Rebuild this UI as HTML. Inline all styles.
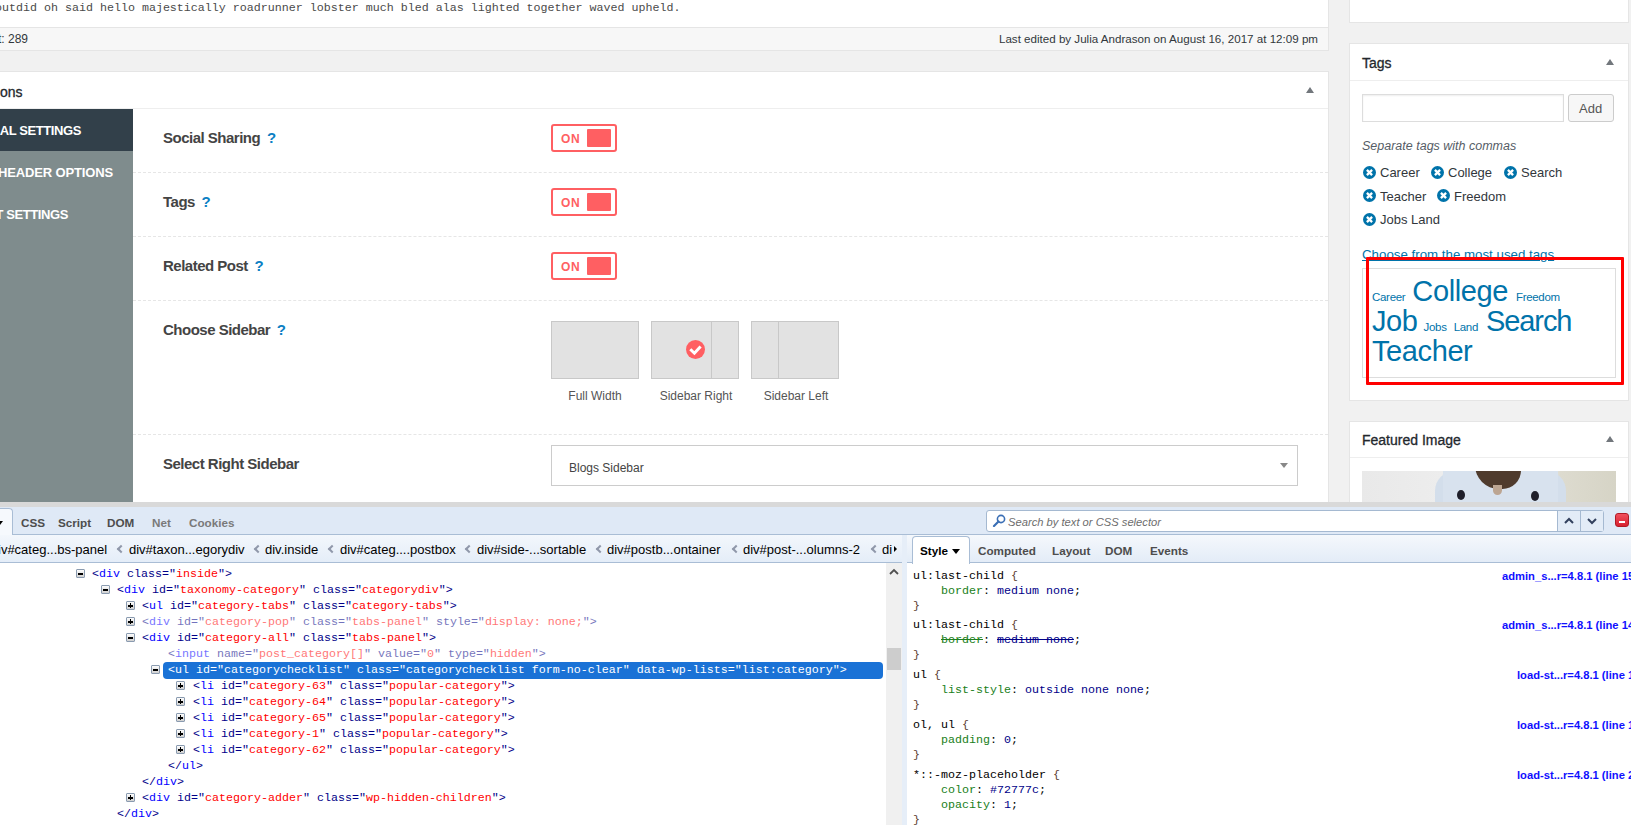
<!DOCTYPE html>
<html><head><meta charset="utf-8">
<style>
*{box-sizing:border-box;margin:0;padding:0}
html,body{width:1631px;height:825px;overflow:hidden;background:#f1f1f1;font-family:"Liberation Sans",sans-serif;position:relative}
.a{position:absolute}
.mono{font-family:"Liberation Mono",monospace}
.nw{white-space:nowrap}

.lbl{font-size:15px;font-weight:bold;color:#444;line-height:16px;letter-spacing:-0.5px}
.q{color:#0c7fc4;margin-left:3px}
.tg{width:66px;height:28px;border:2px solid #ff5f62;border-radius:3px;background:#fff}
.tg span{position:absolute;left:8px;top:7px;font-size:12px;font-weight:bold;color:#ff5f62;line-height:12px;letter-spacing:0.6px}
.tg i{position:absolute;left:34px;top:3px;width:24px;height:18px;background:#ff5f62;border-radius:1px}
.lay{width:88px;height:58px;background:#e2e2e2;border:1px solid #c8c8c8}
.lay b{position:absolute;top:0;bottom:0;width:1px;background:#c8c8c8}
.laylbl{font-size:12px;color:#555;text-align:center;line-height:14px}

.xi{width:13px;height:13px}
.xi svg{display:block}
.tgt{font-size:13px;line-height:16px;color:#32373c}
.cl span{color:#0073aa}

.ftab{font-size:11.7px;font-weight:bold;color:#4d4d4d;line-height:16px}
.bc{font-size:13px;color:#000;line-height:16px}
.bca{width:6px;height:9px;background:none}
.bca:before{content:"";position:absolute;left:1.5px;top:0.5px;width:4px;height:4px;border-left:2px solid #9098aa;border-bottom:2px solid #9098aa;transform:rotate(45deg)}

.dt{font-family:"Liberation Mono",monospace;font-size:11.67px;line-height:16px;color:#000088}
.dt .t{color:#0000ff}
.dt .v{color:#ff0000}
.dg{opacity:.55}
.dh, .dh span{color:#fff !important}
.tb{width:9px;height:9px;border:1px solid #8a9bb0;border-radius:1px;background:linear-gradient(#fdfdfd,#d0d0d0)}
.tb:before{content:"";position:absolute;left:1px;top:3px;width:5px;height:1.5px;background:#000}
.tbp:after{content:"";position:absolute;left:2.8px;top:1px;width:1.5px;height:5px;background:#000}
.ct{font-family:"Liberation Mono",monospace;font-size:11.67px;line-height:16px;color:#000}
.cb{color:#5a4030}
.cp{color:#208020}
.cv{color:#000088}
.lnk{font-size:11.2px;font-weight:bold;color:#1010ff;line-height:16px}
</style></head><body>

<!-- ===== editor top ===== -->
<div class="a" style="left:0;top:0;width:1329px;height:27px;background:#fff;border-right:1px solid #e5e5e5"></div>
<div class="a mono nw" style="left:-5px;top:0px;font-size:11.67px;line-height:16px;color:#4a4a4a">outdid oh said hello majestically roadrunner lobster much bled alas lighted together waved upheld.</div>
<!-- status bar -->
<div class="a" style="left:0;top:27px;width:1329px;height:24px;background:#f7f7f7;border-top:1px solid #e5e5e5;border-bottom:1px solid #e5e5e5;border-right:1px solid #e5e5e5"></div>
<div class="a nw" style="left:-2px;top:31px;font-size:12px;line-height:16px;color:#32373c">t: 289</div>
<div class="a nw" style="right:313px;top:31px;font-size:11.6px;line-height:16px;color:#32373c">Last edited by Julia Andrason on August 16, 2017 at 12:09 pm</div>

<!-- ===== postbox main ===== -->
<div class="a" style="left:0;top:71px;width:1329px;height:440px;background:#fff;border:1px solid #e5e5e5;border-left:0"></div>
<div class="a" style="left:0;top:108px;width:1328px;height:1px;background:#eee"></div>
<div class="a nw" style="left:0;top:84px;font-size:14px;line-height:16px;color:#23282d;-webkit-text-stroke:0.3px #23282d">ons</div>
<div class="a" style="left:1306px;top:87px;width:0;height:0;border-left:4.5px solid transparent;border-right:4.5px solid transparent;border-bottom:6px solid #72777c"></div>

<!-- left nav -->
<div class="a" style="left:0;top:109px;width:133px;height:400px;background:#7f8c8d"></div>
<div class="a" style="left:0;top:109px;width:133px;height:42px;background:#32404a"></div>
<div class="a nw" style="right:1550px;top:124px;font-size:13px;font-weight:bold;color:#fff;line-height:14px;letter-spacing:-0.4px">AL SETTINGS</div>
<div class="a nw" style="right:1518px;top:166px;font-size:13px;font-weight:bold;color:#fff;line-height:14px;letter-spacing:-0.15px">HEADER OPTIONS</div>
<div class="a nw" style="right:1563px;top:208px;font-size:13px;font-weight:bold;color:#fff;line-height:14px;letter-spacing:-0.4px">T SETTINGS</div>

<!-- content rows -->

<!-- row separators (dashed) -->
<div class="a" style="left:133px;top:172px;width:1195px;border-top:1px dashed #e6e6e6"></div>
<div class="a" style="left:133px;top:236px;width:1195px;border-top:1px dashed #e6e6e6"></div>
<div class="a" style="left:133px;top:300px;width:1195px;border-top:1px dashed #e6e6e6"></div>
<div class="a" style="left:133px;top:434px;width:1195px;border-top:1px dashed #e6e6e6"></div>

<div class="a nw lbl" style="left:163px;top:130px">Social Sharing <span class="q">?</span></div>
<div class="a nw lbl" style="left:163px;top:194px">Tags <span class="q">?</span></div>
<div class="a nw lbl" style="left:163px;top:258px">Related Post <span class="q">?</span></div>
<div class="a nw lbl" style="left:163px;top:322px">Choose Sidebar <span class="q">?</span></div>
<div class="a nw lbl" style="left:163px;top:456px">Select Right Sidebar</div>

<div class="a tg" style="left:551px;top:124px"><span>ON</span><i></i></div>
<div class="a tg" style="left:551px;top:188px"><span>ON</span><i></i></div>
<div class="a tg" style="left:551px;top:252px"><span>ON</span><i></i></div>

<div class="a lay" style="left:551px;top:321px"></div>
<div class="a lay" style="left:651px;top:321px"><b style="left:59px"></b></div>
<div class="a lay" style="left:751px;top:321px"><b style="left:26px"></b></div>
<div class="a" style="left:686px;top:340px;width:19px;height:19px;border-radius:50%;background:#ff5f62"></div>
<svg class="a" style="left:686px;top:340px" width="19" height="19" viewBox="0 0 19 19"><path d="M4.3 9.2 L8.4 13.2 L14.6 6.4" fill="none" stroke="#fff" stroke-width="3"/></svg>
<div class="a nw laylbl" style="left:551px;top:389px;width:88px">Full Width</div>
<div class="a nw laylbl" style="left:651px;top:389px;width:90px">Sidebar Right</div>
<div class="a nw laylbl" style="left:751px;top:389px;width:90px">Sidebar Left</div>

<div class="a" style="left:551px;top:445px;width:747px;height:41px;border:1px solid #ccc;background:#fff"></div>
<div class="a nw" style="left:569px;top:460px;font-size:12px;line-height:16px;color:#444">Blogs Sidebar</div>
<div class="a" style="left:1280px;top:463px;width:0;height:0;border-left:4px solid transparent;border-right:4px solid transparent;border-top:5px solid #888"></div>


<!-- ===== right sidebar ===== -->
<div class="a" style="left:1349px;top:-2px;width:280px;height:25px;background:#fff;border:1px solid #e5e5e5"></div>
<!-- tags box -->
<div class="a" style="left:1349px;top:43px;width:280px;height:358px;background:#fff;border:1px solid #e5e5e5"></div>
<div class="a" style="left:1350px;top:80px;width:278px;height:1px;background:#eee"></div>
<div class="a nw" style="left:1362px;top:55px;font-size:14px;line-height:16px;color:#23282d;-webkit-text-stroke:0.3px #23282d">Tags</div>
<div class="a" style="left:1606px;top:59px;width:0;height:0;border-left:4.5px solid transparent;border-right:4.5px solid transparent;border-bottom:6px solid #72777c"></div>
<div class="a" style="left:1362px;top:94px;width:202px;height:28px;border:1px solid #ddd;box-shadow:inset 0 1px 2px rgba(0,0,0,.07);background:#fff"></div>
<div class="a" style="left:1568px;top:94px;width:46px;height:28px;border:1px solid #ccc;border-radius:3px;background:#f7f7f7"></div>
<div class="a nw" style="left:1579px;top:101px;font-size:13px;line-height:16px;color:#555">Add</div>
<div class="a nw" style="left:1362px;top:137px;font-size:12.5px;line-height:16px;color:#555d66;font-style:italic;top:138px">Separate tags with commas</div>

<div class="a xi" style="left:1363px;top:166px"><svg width="13" height="13" viewBox="0 0 13 13"><circle cx="6.5" cy="6.5" r="6.5" fill="#0073aa"/><path d="M3.9 3.9 L9.1 9.1 M9.1 3.9 L3.9 9.1" stroke="#fff" stroke-width="2.3"/></svg></div><div class="a nw tgt" style="left:1380px;top:165px">Career</div>
<div class="a xi" style="left:1431px;top:166px"><svg width="13" height="13" viewBox="0 0 13 13"><circle cx="6.5" cy="6.5" r="6.5" fill="#0073aa"/><path d="M3.9 3.9 L9.1 9.1 M9.1 3.9 L3.9 9.1" stroke="#fff" stroke-width="2.3"/></svg></div><div class="a nw tgt" style="left:1448px;top:165px">College</div>
<div class="a xi" style="left:1504px;top:166px"><svg width="13" height="13" viewBox="0 0 13 13"><circle cx="6.5" cy="6.5" r="6.5" fill="#0073aa"/><path d="M3.9 3.9 L9.1 9.1 M9.1 3.9 L3.9 9.1" stroke="#fff" stroke-width="2.3"/></svg></div><div class="a nw tgt" style="left:1521px;top:165px">Search</div>
<div class="a xi" style="left:1363px;top:189px"><svg width="13" height="13" viewBox="0 0 13 13"><circle cx="6.5" cy="6.5" r="6.5" fill="#0073aa"/><path d="M3.9 3.9 L9.1 9.1 M9.1 3.9 L3.9 9.1" stroke="#fff" stroke-width="2.3"/></svg></div><div class="a nw tgt" style="left:1380px;top:189px">Teacher</div>
<div class="a xi" style="left:1437px;top:189px"><svg width="13" height="13" viewBox="0 0 13 13"><circle cx="6.5" cy="6.5" r="6.5" fill="#0073aa"/><path d="M3.9 3.9 L9.1 9.1 M9.1 3.9 L3.9 9.1" stroke="#fff" stroke-width="2.3"/></svg></div><div class="a nw tgt" style="left:1454px;top:189px">Freedom</div>
<div class="a xi" style="left:1363px;top:213px"><svg width="13" height="13" viewBox="0 0 13 13"><circle cx="6.5" cy="6.5" r="6.5" fill="#0073aa"/><path d="M3.9 3.9 L9.1 9.1 M9.1 3.9 L3.9 9.1" stroke="#fff" stroke-width="2.3"/></svg></div><div class="a nw tgt" style="left:1380px;top:212px">Jobs Land</div>

<div class="a nw" style="left:1362px;top:247px;font-size:13.3px;line-height:16px;color:#0073aa;text-decoration:underline">Choose from the most used tags</div>
<div class="a" style="left:1362px;top:268px;width:254px;height:110px;border:1px solid #ddd;background:#fff"></div>
<div class="a nw cl" style="left:1372px;top:276px;line-height:30px;font-size:29px">
<div style="height:30px"><span style="font-size:11.5px;letter-spacing:-0.3px;margin-right:7px">Career</span><span style="font-size:29px;letter-spacing:-0.4px;margin-right:8px">College</span><span style="font-size:11.5px;letter-spacing:-0.3px">Freedom</span></div><div style="height:30px"><span style="font-size:29px;letter-spacing:-0.4px;margin-right:6px">Job</span><span style="font-size:11.5px;letter-spacing:-0.3px;margin-right:7px">Jobs</span><span style="font-size:11.5px;letter-spacing:-0.3px;margin-right:8px">Land</span><span style="font-size:29px;letter-spacing:-1.1px">Search</span></div><div style="height:30px"><span style="font-size:29px;letter-spacing:-0.4px">Teacher</span></div></div>
<div class="a" style="left:1366px;top:257px;width:258px;height:128px;border:3px solid #ff0000;border-radius:1px"></div>

<!-- featured image -->
<div class="a" style="left:1349px;top:421px;width:280px;height:100px;background:#fff;border:1px solid #e5e5e5"></div>
<div class="a" style="left:1350px;top:457px;width:278px;height:1px;background:#eee"></div>
<div class="a nw" style="left:1362px;top:432px;font-size:14px;line-height:16px;color:#23282d;-webkit-text-stroke:0.3px #23282d">Featured Image</div>
<div class="a" style="left:1606px;top:436px;width:0;height:0;border-left:4.5px solid transparent;border-right:4.5px solid transparent;border-bottom:6px solid #72777c"></div>
<div class="a" style="left:1362px;top:471px;width:254px;height:31px;overflow:hidden;background:linear-gradient(90deg,#e9e9e9,#eeeeee 40%,#e6e6e4 75%,#dddbcf 78%,#d6d4c6)">
<div class="a" style="left:73px;top:0;width:131px;height:40px;background:#d3deeb;border-radius:20px 20px 0 0"></div>
<div class="a" style="left:81px;top:0;width:115px;height:40px;background:#d8e2ee"></div>
<div class="a" style="left:113px;top:-6px;width:46px;height:24px;background:#4f3b2d;border-radius:0 0 20px 26px"></div>
<div class="a" style="left:131px;top:14px;width:9px;height:10px;background:#bca592;border-radius:0 0 5px 5px"></div>
<div class="a" style="left:95px;top:19px;width:8px;height:10px;background:#1f1f2a;border-radius:50%"></div>
<div class="a" style="left:169px;top:20px;width:8px;height:10px;background:#1f1f2a;border-radius:50%"></div>
</div>


<!-- ===== devtools ===== -->
<div class="a" style="left:0;top:502px;width:1631px;height:323px;background:#fff"></div>
<div class="a" style="left:0;top:502px;width:1631px;height:5px;background:#d9d9d9"></div>
<!-- tab bar -->
<div class="a" style="left:0;top:507px;width:1631px;height:28px;background:#dfe9f6;border-bottom:1px solid #a9bdd5"></div>
<div class="a" style="left:-10px;top:508px;width:23px;height:28px;background:#f6f9fd;border:1px solid #a9bdd5;border-bottom:0;border-radius:0 4px 0 0"></div>
<div class="a" style="left:-3px;top:521px;width:0;height:0;border-left:3.5px solid transparent;border-right:3.5px solid transparent;border-top:4px solid #000"></div>
<div class="a nw ftab" style="left:21px;top:515px">CSS</div>
<div class="a nw ftab" style="left:58px;top:515px">Script</div>
<div class="a nw ftab" style="left:107px;top:515px">DOM</div>
<div class="a nw ftab" style="left:152px;top:515px;color:#7a7a7a">Net</div>
<div class="a nw ftab" style="left:189px;top:515px;color:#7a7a7a">Cookies</div>
<!-- search -->
<div class="a" style="left:986px;top:510px;width:618px;height:22px;background:#fff;border:1px solid #a5b9d1;border-radius:3px"></div>
<div class="a" style="left:1557px;top:511px;width:46px;height:20px;background:#e3ecf7;border-left:1px solid #a5b9d1"></div>
<div class="a" style="left:1580px;top:511px;width:1px;height:20px;background:#a5b9d1"></div>
<svg class="a" style="left:1562px;top:514px" width="14" height="14" viewBox="0 0 14 14"><path d="M3 9 L7 5 L11 9" fill="none" stroke="#33415e" stroke-width="2"/></svg>
<svg class="a" style="left:1585px;top:514px" width="14" height="14" viewBox="0 0 14 14"><path d="M3 5 L7 9 L11 5" fill="none" stroke="#33415e" stroke-width="2"/></svg>
<div class="a" style="left:1615px;top:513px;width:14px;height:14px;border-radius:3px;background:linear-gradient(#f0505d,#d7202f);border:1px solid #b01a25"></div>
<div class="a" style="left:1619px;top:521px;width:6px;height:2px;background:#fff"></div>
<svg class="a" style="left:992px;top:514px" width="14" height="13" viewBox="0 0 14 13"><circle cx="9" cy="5" r="3.6" fill="none" stroke="#3b6fb5" stroke-width="1.6"/><path d="M6.5 7.5 L2 12" stroke="#3b6fb5" stroke-width="2.2" stroke-linecap="round"/></svg>
<div class="a nw" style="left:1008px;top:514px;font-size:11.2px;line-height:16px;color:#6d6d6d;font-style:italic">Search by text or CSS selector</div>

<!-- breadcrumb bar -->
<div class="a" style="left:0;top:535px;width:907px;height:28px;background:linear-gradient(#f3f7fc,#e4edf8);border-bottom:1px solid #a9bdd5"></div>
<div class="a nw bc" style="left:-2px;top:542px">iv#categ...bs-panel</div>
<div class="a nw bc" style="left:129px;top:542px">div#taxon...egorydiv</div>
<div class="a nw bc" style="left:265px;top:542px">div.inside</div>
<div class="a nw bc" style="left:340px;top:542px">div#categ....postbox</div>
<div class="a nw bc" style="left:477px;top:542px">div#side-...sortable</div>
<div class="a nw bc" style="left:607px;top:542px">div#postb...ontainer</div>
<div class="a nw bc" style="left:743px;top:542px">div#post-...olumns-2</div>
<div class="a nw bc" style="left:882px;top:542px">di</div>
<div class="a" style="left:894px;top:546px;width:0;height:0;border-top:3px solid transparent;border-bottom:3px solid transparent;border-left:3px solid #000"></div>
<div class="a bca" style="left:116px;top:545px"></div>
<div class="a bca" style="left:253px;top:545px"></div>
<div class="a bca" style="left:327px;top:545px"></div>
<div class="a bca" style="left:464px;top:545px"></div>
<div class="a bca" style="left:595px;top:545px"></div>
<div class="a bca" style="left:731px;top:545px"></div>
<div class="a bca" style="left:870px;top:545px"></div>

<!-- right header tabs -->
<div class="a" style="left:907px;top:535px;width:724px;height:28px;background:linear-gradient(#f5f8fc,#e3ecf7);border-bottom:1px solid #a9bdd5"></div>
<div class="a" style="left:902px;top:535px;width:5px;height:290px;background:#e6eef8"></div>
<div class="a" style="left:912px;top:536px;width:58px;height:28px;background:#fff;border:1px solid #a9bdd5;border-bottom:0;border-radius:4px 4px 0 0"></div>
<div class="a nw ftab" style="left:920px;top:543px;color:#000">Style</div>
<div class="a" style="left:952px;top:549px;width:0;height:0;border-left:4px solid transparent;border-right:4px solid transparent;border-top:5px solid #000"></div>
<div class="a nw ftab" style="left:978px;top:543px">Computed</div>
<div class="a nw ftab" style="left:1052px;top:543px">Layout</div>
<div class="a nw ftab" style="left:1105px;top:543px">DOM</div>
<div class="a nw ftab" style="left:1150px;top:543px">Events</div>

<!-- scrollbar -->
<div class="a" style="left:886px;top:563px;width:16px;height:262px;background:#f0f0f0"></div>
<div class="a" style="left:887px;top:648px;width:14px;height:22px;background:#cdcdcd"></div>
<svg class="a" style="left:888px;top:567px" width="12" height="10" viewBox="0 0 12 10"><path d="M2 7 L6 3 L10 7" fill="none" stroke="#505050" stroke-width="1.8"/></svg>
<div class="a tb tbm" style="left:76px;top:569.0px"></div>
<div class="a nw dt" style="left:92px;top:565.5px"><span class="p">&lt;</span><span class="t">div</span> <span class="n">class</span><span class="p">=&quot;</span><span class="v">inside</span><span class="p">&quot;</span><span class="p">&gt;</span></div>
<div class="a tb tbm" style="left:101px;top:585.0px"></div>
<div class="a nw dt" style="left:117px;top:581.5px"><span class="p">&lt;</span><span class="t">div</span> <span class="n">id</span><span class="p">=&quot;</span><span class="v">taxonomy-category</span><span class="p">&quot;</span> <span class="n">class</span><span class="p">=&quot;</span><span class="v">categorydiv</span><span class="p">&quot;</span><span class="p">&gt;</span></div>
<div class="a tb tbp" style="left:126px;top:601.0px"></div>
<div class="a nw dt" style="left:142px;top:597.5px"><span class="p">&lt;</span><span class="t">ul</span> <span class="n">id</span><span class="p">=&quot;</span><span class="v">category-tabs</span><span class="p">&quot;</span> <span class="n">class</span><span class="p">=&quot;</span><span class="v">category-tabs</span><span class="p">&quot;</span><span class="p">&gt;</span></div>
<div class="a tb tbp" style="left:126px;top:617.0px"></div>
<div class="a nw dt dg" style="left:142px;top:613.5px"><span class="p">&lt;</span><span class="t">div</span> <span class="n">id</span><span class="p">=&quot;</span><span class="v">category-pop</span><span class="p">&quot;</span> <span class="n">class</span><span class="p">=&quot;</span><span class="v">tabs-panel</span><span class="p">&quot;</span> <span class="n">style</span><span class="p">=&quot;</span><span class="v">display: none;</span><span class="p">&quot;</span><span class="p">&gt;</span></div>
<div class="a tb tbm" style="left:126px;top:633.0px"></div>
<div class="a nw dt" style="left:142px;top:629.5px"><span class="p">&lt;</span><span class="t">div</span> <span class="n">id</span><span class="p">=&quot;</span><span class="v">category-all</span><span class="p">&quot;</span> <span class="n">class</span><span class="p">=&quot;</span><span class="v">tabs-panel</span><span class="p">&quot;</span><span class="p">&gt;</span></div>
<div class="a nw dt dg" style="left:168px;top:645.5px"><span class="p">&lt;</span><span class="t">input</span> <span class="n">name</span><span class="p">=&quot;</span><span class="v">post_category[]</span><span class="p">&quot;</span> <span class="n">value</span><span class="p">=&quot;</span><span class="v">0</span><span class="p">&quot;</span> <span class="n">type</span><span class="p">=&quot;</span><span class="v">hidden</span><span class="p">&quot;</span><span class="p">&gt;</span></div>
<div class="a" style="left:163px;top:662.0px;width:720px;height:17px;background:#1a72d6;border-radius:4px"></div>
<div class="a tb tbm" style="left:151px;top:665.0px"></div>
<div class="a nw dt dh" style="left:168px;top:661.5px"><span class="p">&lt;</span><span class="t">ul</span> <span class="n">id</span><span class="p">=&quot;</span><span class="v">categorychecklist</span><span class="p">&quot;</span> <span class="n">class</span><span class="p">=&quot;</span><span class="v">categorychecklist form-no-clear</span><span class="p">&quot;</span> <span class="n">data-wp-lists</span><span class="p">=&quot;</span><span class="v">list:category</span><span class="p">&quot;</span><span class="p">&gt;</span></div>
<div class="a tb tbp" style="left:176px;top:681.0px"></div>
<div class="a nw dt" style="left:193px;top:677.5px"><span class="p">&lt;</span><span class="t">li</span> <span class="n">id</span><span class="p">=&quot;</span><span class="v">category-63</span><span class="p">&quot;</span> <span class="n">class</span><span class="p">=&quot;</span><span class="v">popular-category</span><span class="p">&quot;</span><span class="p">&gt;</span></div>
<div class="a tb tbp" style="left:176px;top:697.0px"></div>
<div class="a nw dt" style="left:193px;top:693.5px"><span class="p">&lt;</span><span class="t">li</span> <span class="n">id</span><span class="p">=&quot;</span><span class="v">category-64</span><span class="p">&quot;</span> <span class="n">class</span><span class="p">=&quot;</span><span class="v">popular-category</span><span class="p">&quot;</span><span class="p">&gt;</span></div>
<div class="a tb tbp" style="left:176px;top:713.0px"></div>
<div class="a nw dt" style="left:193px;top:709.5px"><span class="p">&lt;</span><span class="t">li</span> <span class="n">id</span><span class="p">=&quot;</span><span class="v">category-65</span><span class="p">&quot;</span> <span class="n">class</span><span class="p">=&quot;</span><span class="v">popular-category</span><span class="p">&quot;</span><span class="p">&gt;</span></div>
<div class="a tb tbp" style="left:176px;top:729.0px"></div>
<div class="a nw dt" style="left:193px;top:725.5px"><span class="p">&lt;</span><span class="t">li</span> <span class="n">id</span><span class="p">=&quot;</span><span class="v">category-1</span><span class="p">&quot;</span> <span class="n">class</span><span class="p">=&quot;</span><span class="v">popular-category</span><span class="p">&quot;</span><span class="p">&gt;</span></div>
<div class="a tb tbp" style="left:176px;top:745.0px"></div>
<div class="a nw dt" style="left:193px;top:741.5px"><span class="p">&lt;</span><span class="t">li</span> <span class="n">id</span><span class="p">=&quot;</span><span class="v">category-62</span><span class="p">&quot;</span> <span class="n">class</span><span class="p">=&quot;</span><span class="v">popular-category</span><span class="p">&quot;</span><span class="p">&gt;</span></div>
<div class="a nw dt" style="left:168px;top:757.5px"><span class="p">&lt;/</span><span class="t">ul</span><span class="p">&gt;</span></div>
<div class="a nw dt" style="left:142px;top:773.5px"><span class="p">&lt;/</span><span class="t">div</span><span class="p">&gt;</span></div>
<div class="a tb tbp" style="left:126px;top:793.0px"></div>
<div class="a nw dt" style="left:142px;top:789.5px"><span class="p">&lt;</span><span class="t">div</span> <span class="n">id</span><span class="p">=&quot;</span><span class="v">category-adder</span><span class="p">&quot;</span> <span class="n">class</span><span class="p">=&quot;</span><span class="v">wp-hidden-children</span><span class="p">&quot;</span><span class="p">&gt;</span></div>
<div class="a nw dt" style="left:117px;top:805.5px"><span class="p">&lt;/</span><span class="t">div</span><span class="p">&gt;</span></div>
<div class="a nw ct" style="left:913px;top:568.4px">ul:last-child <span class="cb">{</span></div>
<div class="a nw ct" style="left:941px;top:583.4px"><span class="cp">border</span>: <span class="cv">medium none</span>;</div>
<div class="a nw ct cb" style="left:913px;top:598.4px">}</div>
<div class="a nw lnk" style="left:1502px;top:568.4px">admin_s...r=4.8.1 (line 15</div>
<div class="a nw ct" style="left:913px;top:617.2px">ul:last-child <span class="cb">{</span></div>
<div class="a nw ct" style="left:941px;top:632.2px"><span class="cp" style="text-decoration:line-through">border</span>: <span class="cv" style="text-decoration:line-through">medium none</span>;</div>
<div class="a nw ct cb" style="left:913px;top:647.2px">}</div>
<div class="a nw lnk" style="left:1502px;top:617.2px">admin_s...r=4.8.1 (line 14</div>
<div class="a nw ct" style="left:913px;top:667.0px">ul <span class="cb">{</span></div>
<div class="a nw ct" style="left:941px;top:682.0px"><span class="cp">list-style</span>: <span class="cv">outside none none</span>;</div>
<div class="a nw ct cb" style="left:913px;top:697.0px">}</div>
<div class="a nw lnk" style="left:1517px;top:667.0px">load-st...r=4.8.1 (line 1</div>
<div class="a nw ct" style="left:913px;top:716.8px">ol, ul <span class="cb">{</span></div>
<div class="a nw ct" style="left:941px;top:731.8px"><span class="cp">padding</span>: <span class="cv">0</span>;</div>
<div class="a nw ct cb" style="left:913px;top:746.8px">}</div>
<div class="a nw lnk" style="left:1517px;top:716.8px">load-st...r=4.8.1 (line 1</div>
<div class="a nw ct" style="left:913px;top:766.6px">*::-moz-placeholder <span class="cb">{</span></div>
<div class="a nw ct" style="left:941px;top:781.6px"><span class="cp">color</span>: <span class="cv">#72777c</span>;</div>
<div class="a nw ct" style="left:941px;top:796.6px"><span class="cp">opacity</span>: <span class="cv">1</span>;</div>
<div class="a nw ct cb" style="left:913px;top:811.6px">}</div>
<div class="a nw lnk" style="left:1517px;top:766.6px">load-st...r=4.8.1 (line 2</div>


</body></html>
